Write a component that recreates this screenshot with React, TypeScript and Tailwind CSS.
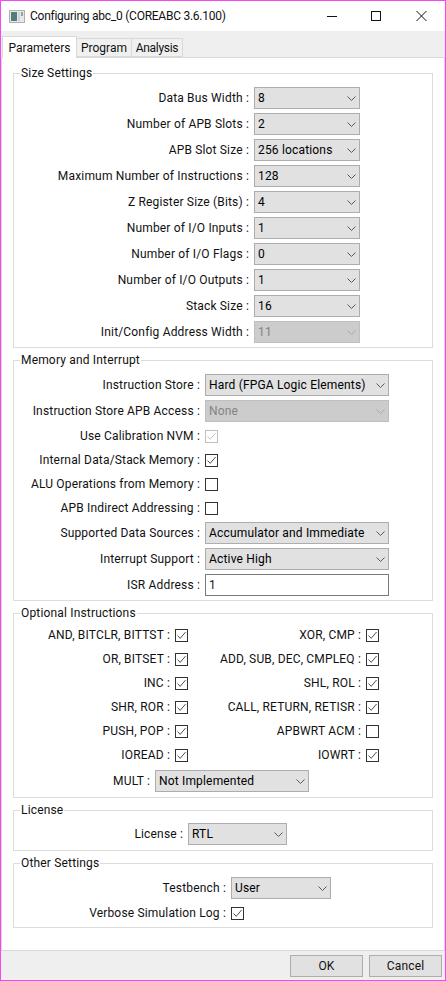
import React from "react";

const font = "[font-family:'Roboto','Noto_Sans',sans-serif]";

function Chevron({ disabled }: { disabled?: boolean }) {
  return (
    <svg width="9" height="5" viewBox="0 0 9 5" fill="none" className="shrink-0">
      <path d="M0.5 0.5L4.5 4.5L8.5 0.5" stroke={disabled ? "#a9a9a9" : "#5a5a5a"} strokeWidth="1" />
    </svg>
  );
}

function Select({ value, w, disabled }: { value: string; w: string; disabled?: boolean }) {
  return (
    <div
      className={
        "flex h-[22px] items-center justify-between border pl-[3px] pr-[3px] " +
        w +
        (disabled
          ? " border-[#bfbfbf] bg-[#cccccc] text-[#838383]"
          : " border-[#adadad] bg-[#e1e1e1] text-black")
      }
    >
      <span className="whitespace-nowrap">{value}</span>
      <Chevron disabled={disabled} />
    </div>
  );
}

function Check({ checked, disabled }: { checked?: boolean; disabled?: boolean }) {
  return (
    <div
      className={
        "flex h-[13px] w-[13px] shrink-0 items-center justify-center border bg-white " +
        (disabled ? "border-[#bfbfbf]" : "border-[#333333]")
      }
    >
      {checked && (
        <svg width="11" height="11" viewBox="0 0 11 11" fill="none">
          <path d="M1.5 5.5L4.2 8.3L9.6 2" stroke={disabled ? "#c4c4c4" : "#505050"} strokeWidth="1" />
        </svg>
      )}
    </div>
  );
}

function Row({
  label,
  labelW,
  h,
  children,
}: {
  label: string;
  labelW: string;
  h: string;
  children: React.ReactNode;
}) {
  return (
    <div className={"flex items-center gap-[5px] " + h}>
      <div className={"whitespace-nowrap text-right " + labelW}>{label}</div>
      {children}
    </div>
  );
}

function Group({ title, className, children }: { title: string; className: string; children: React.ReactNode }) {
  return (
    <fieldset className={"mx-[11px] min-w-0 border border-[#dcdcdc] " + className}>
      <legend className="ml-[6px] h-[16px] px-[1px] leading-[16px]">{title}</legend>
      {children}
    </fieldset>
  );
}

const size: [string, string, boolean?][] = [
  ["Data Bus Width :", "8"],
  ["Number of APB Slots :", "2"],
  ["APB Slot Size :", "256 locations"],
  ["Maximum Number of Instructions :", "128"],
  ["Z Register Size (Bits) :", "4"],
  ["Number of I/O Inputs :", "1"],
  ["Number of I/O Flags :", "0"],
  ["Number of I/O Outputs :", "1"],
  ["Stack Size :", "16"],
  ["Init/Config Address Width :", "11", true],
];

const instr: [string, boolean, string, boolean][] = [
  ["AND, BITCLR, BITTST :", true, "XOR, CMP :", true],
  ["OR, BITSET :", true, "ADD, SUB, DEC, CMPLEQ :", true],
  ["INC :", true, "SHL, ROL :", true],
  ["SHR, ROR :", true, "CALL, RETURN, RETISR :", true],
  ["PUSH, POP :", true, "APBWRT ACM :", false],
  ["IOREAD :", true, "IOWRT :", true],
];

export default function App() {
  const m = "w-[186px]";
  return (
    <div
      className={
        "flex h-[981px] w-[446px] flex-col overflow-hidden border border-[#f545f5] bg-white text-[12px] leading-[16px] tracking-[0.17px] text-[#111111] " +
        font
      }
    >
      <div className="flex h-[30px] shrink-0 items-center bg-white">
        <svg width="16" height="13" viewBox="0 0 16 13" className="ml-[8px] shrink-0">
          <rect x="0.5" y="0.5" width="15" height="12" fill="#e8e8e8" stroke="#b0b0b0" />
          <rect x="2" y="2" width="6" height="9" fill="#4f7f78" />
          <rect x="9" y="2" width="2" height="9" fill="#c8d8d8" />
          <rect x="12" y="2" width="2" height="4" fill="#8aa5a5" />
        </svg>
        <span className="ml-[5px] whitespace-nowrap tracking-[-0.25px]">Configuring abc_0 (COREABC 3.6.100)</span>
        <div className="ml-auto flex items-center">
          <svg width="46" height="12" viewBox="0 0 46 12">
            <path d="M20 6.5H30" stroke="#111" />
          </svg>
          <svg width="46" height="12" viewBox="0 0 46 12">
            <rect x="18.5" y="1.5" width="9" height="9" fill="none" stroke="#111" />
          </svg>
          <svg width="45" height="12" viewBox="0 0 45 12" className="mr-[1px]">
            <path d="M17.5 1L27.5 11M27.5 1L17.5 11" stroke="#111" />
          </svg>
        </div>
      </div>

      <div className="flex h-[26px] shrink-0 items-end bg-[#efefef] pl-[1px]">
        <div className="z-10 -mb-[1px] flex h-[22px] w-[75px] items-center justify-center border border-b-0 border-[#d9d9d9] bg-white tracking-normal">
          Parameters
        </div>
        <div className="flex h-[19px] w-[55px] items-center justify-center border border-l-0 border-[#d9d9d9] bg-[#f0f0f0] tracking-normal">
          Program
        </div>
        <div className="flex h-[19px] w-[51px] items-center justify-center border border-l-0 border-[#d9d9d9] bg-[#f0f0f0] tracking-[-0.3px]">
          Analysis
        </div>
      </div>

      <div className="flex h-[894px] shrink-0 flex-col border border-[#d9d9d9] bg-white pt-[7px]">
        <Group title="Size Settings" className="h-[283px]">
          <div className="pt-[4px]">
            {size.map(([l, v, d]) => (
              <Row key={l} label={l} labelW="w-[235px]" h="h-[26px]">
                <Select value={v} w="w-[106px]" disabled={d} />
              </Row>
            ))}
          </div>
        </Group>

        <Group title="Memory and Interrupt" className="mt-[4px] h-[249px]">
          <div className="pt-[4px]">
            <Row label="Instruction Store :" labelW={m} h="h-[26px]">
              <Select value="Hard (FPGA Logic Elements)" w="w-[184px]" />
            </Row>
            <Row label="Instruction Store APB Access :" labelW={m} h="h-[26px]">
              <Select value="None" w="w-[184px]" disabled />
            </Row>
            <Row label="Use Calibration NVM :" labelW={m} h="h-[24px]">
              <Check checked disabled />
            </Row>
            <Row label="Internal Data/Stack Memory :" labelW={m} h="h-[24px]">
              <Check checked />
            </Row>
            <Row label="ALU Operations from Memory :" labelW={m} h="h-[24px]">
              <Check />
            </Row>
            <Row label="APB Indirect Addressing :" labelW={m} h="h-[24px]">
              <Check />
            </Row>
            <Row label="Supported Data Sources :" labelW={m} h="h-[26px]">
              <Select value="Accumulator and Immediate" w="w-[184px]" />
            </Row>
            <Row label="Interrupt Support :" labelW={m} h="h-[26px]">
              <Select value="Active High" w="w-[184px]" />
            </Row>
            <Row label="ISR Address :" labelW={m} h="h-[26px]">
              <div className="flex h-[22px] w-[184px] items-center border border-[#7a7a7a] bg-white pl-[3px]">1</div>
            </Row>
          </div>
        </Group>

        <Group title="Optional Instructions" className="mt-[4px] h-[193px]">
          <div className="pt-[2px]">
            {instr.map(([a, ac, b, bc]) => (
              <div key={a} className="flex h-[24px] items-center">
                <Row label={a} labelW="w-[156px]" h="h-[24px]">
                  <Check checked={ac} />
                </Row>
                <Row label={b} labelW="w-[173px]" h="h-[24px]">
                  <Check checked={bc} />
                </Row>
              </div>
            ))}
            <Row label="MULT :" labelW="w-[136px]" h="h-[28px]">
              <Select value="Not Implemented" w="w-[154px]" />
            </Row>
          </div>
        </Group>

        <Group title="License" className="mt-[4px] h-[49px]">
          <div className="pt-[3px]">
            <Row label="License :" labelW="w-[169px]" h="h-[26px]">
              <Select value="RTL" w="w-[99px]" />
            </Row>
          </div>
        </Group>

        <Group title="Other Settings" className="mt-[4px] h-[73px]">
          <div className="pt-[4px]">
            <Row label="Testbench :" labelW="w-[212px]" h="h-[26px]">
              <Select value="User" w="w-[100px]" />
            </Row>
            <Row label="Verbose Simulation Log :" labelW="w-[212px]" h="h-[24px]">
              <Check checked />
            </Row>
          </div>
        </Group>
      </div>

      <div className="flex flex-1 items-center justify-end gap-[6px] bg-[#efefef] pr-[3px]">
        <div className="flex h-[22px] w-[73px] items-center justify-center border border-[#adadad] bg-[#e1e1e1]">OK</div>
        <div className="flex h-[22px] w-[73px] items-center justify-center border border-[#adadad] bg-[#e1e1e1]">Cancel</div>
      </div>
    </div>
  );
}
